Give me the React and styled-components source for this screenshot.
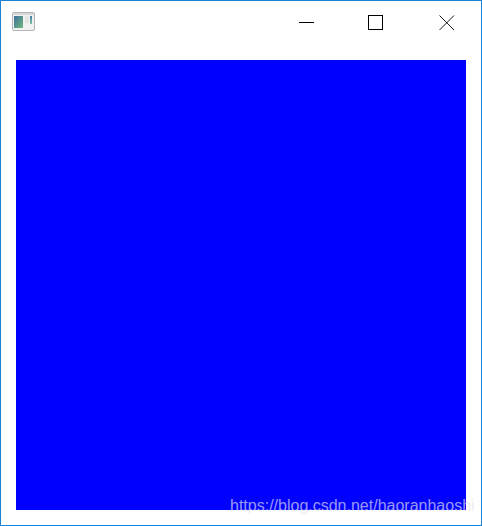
import React from 'react';
import styled, { createGlobalStyle } from 'styled-components';

const GlobalStyle = createGlobalStyle`
	html, body {
		margin: 0;
		padding: 0;
		background: #fff;
	}
`;

const Window = styled.div`
	position: relative;
	box-sizing: border-box;
	width: 482px;
	height: 526px;
	border: 1px solid #1883d7;
	background: #fff;
	overflow: hidden;
`;

const TitleBar = styled.header`
	display: flex;
	align-items: flex-start;
	height: 59px;
	padding: 11px 26px 0 11px;
	box-sizing: border-box;
`;

const AppIcon = styled.svg`
	display: block;
	width: 24px;
	height: 20px;
`;

const Controls = styled.div`
	display: flex;
	margin-left: auto;
`;

const Control = styled.button`
	display: block;
	width: 16px;
	height: 16px;
	margin: 3px 0 0 ${(p) => p.$gap}px;
	padding: 0;
	border: 0;
	background: none;
`;

const Glyph = styled.svg`
	display: block;
	width: 16px;
	height: 16px;
`;

const Canvas = styled.main`
	width: 450px;
	height: 450px;
	margin-left: 15px;
	background: #0000ff;
`;

const Watermark = styled.span`
	position: absolute;
	left: 229px;
	top: 495px;
	font-family: 'Liberation Sans', Arial, sans-serif;
	font-size: 16px;
	line-height: 20px;
	color: rgba(228, 228, 236, 0.68);
	white-space: nowrap;
`;

const App = () => (
	<Window>
		<GlobalStyle />
		<TitleBar>
			<AppIcon viewBox="0 0 24 20">
				<rect x="0.5" y="0.5" width="22" height="18" rx="1.5" fill="#f1f1f1" stroke="#b4b4b4" />
				<rect x="1" y="1" width="21" height="2" fill="#d6d6d6" />
				<defs>
					<linearGradient id="pane" x1="0" y1="0" x2="1" y2="1">
						<stop offset="0" stopColor="#3f6f9c" />
						<stop offset="1" stopColor="#6fb87c" />
					</linearGradient>
					<linearGradient id="side" x1="0" y1="0" x2="0" y2="1">
						<stop offset="0" stopColor="#3f7fa8" />
						<stop offset="1" stopColor="#7fc0a0" />
					</linearGradient>
				</defs>
				<rect x="2" y="4" width="9" height="12" fill="url(#pane)" />
				<rect x="13" y="4" width="4" height="7" fill="#e4e4e4" />
				<rect x="18" y="4" width="2" height="8" fill="url(#side)" />
			</AppIcon>
			<Controls>
				<Control $gap={0} aria-label="minimize">
					<Glyph viewBox="0 0 16 16">
						<path d="M0 7.5H15" stroke="#000" fill="none" />
					</Glyph>
				</Control>
				<Control $gap={53} aria-label="maximize">
					<Glyph viewBox="0 0 16 16">
						<rect x="0.5" y="0.5" width="14" height="14" stroke="#000" fill="none" />
					</Glyph>
				</Control>
				<Control $gap={55} aria-label="close">
					<Glyph viewBox="0 0 16 16">
						<path d="M0.5 0.5L15 15M15 0.5L0.5 15" stroke="#000" strokeWidth="0.9" fill="none" />
					</Glyph>
				</Control>
			</Controls>
		</TitleBar>
		<Canvas />
		<Watermark>https://blog.csdn.net/haoranhaoshi</Watermark>
	</Window>
);

export default App;
